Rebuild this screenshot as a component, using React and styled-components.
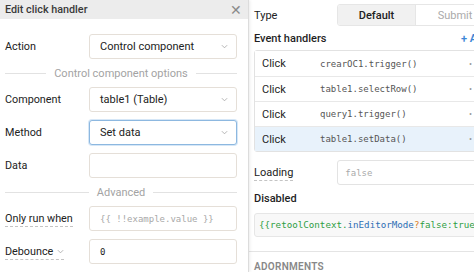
import React from "react";
import styled, { createGlobalStyle } from "styled-components";

const Global = createGlobalStyle`
  html, body { margin: 0; padding: 0; background: #fff; }
  body { font-family: Roboto, "Noto Sans", sans-serif; color: #1f1f1f; overflow: hidden; }
  * { box-sizing: border-box; }
`;

const MONO = `"DejaVu Sans Mono", "Liberation Mono", monospace`;

const Page = styled.div`
  display: flex;
  width: 474px;
  height: 272px;
  overflow: hidden;
`;

const Popover = styled.div`
  width: 249px;
  flex: none;
  display: flex;
  flex-direction: column;
  border-right: 1px solid #dcdcdc;
  box-shadow: 1px 0 3px rgba(0,0,0,0.08);
  z-index: 1;
  background: #fff;
`;

const Header = styled.div`
  height: 25px;
  background: #ececec;
  display: flex;
  align-items: center;
  justify-content: space-between;
  padding: 0 6px 0 5px;
  font-size: 10.8px;
  font-weight: 500;
  color: #3a3a3a;
`;

const Close = styled.span`
  font-size: 14px;
  color: #8a8a8a;
  font-weight: 300;
`;

const Body = styled.div`
  padding: 15px 11px 0 5px;
  display: flex;
  flex-direction: column;
`;

const Row = styled.div`
  display: grid;
  grid-template-columns: 84px 1fr;
  align-items: center;
  height: 25px;
  margin-bottom: ${(p) => p.$mb ?? 8}px;
`;

const Label = styled.span`
  font-size: 10.8px;
  color: #222;
  justify-self: start;
  display: flex;
  align-items: center;
  gap: 4px;
  ${(p) => p.$dotted && `border-bottom: 1px dashed #c4c4c4; line-height: 15px;`}
`;

const Field = styled.div`
  height: 25px;
  border: 1px solid ${(p) => (p.$focus ? "#8db8e0" : "#e5dfd8")};
  box-shadow: ${(p) => (p.$focus ? "0 0 0 1px #d6e7f7" : "none")};
  border-radius: 3px;
  display: flex;
  align-items: center;
  justify-content: space-between;
  padding: 0 8px 0 10px;
  font-size: ${(p) => (p.$mono ? "9px" : "11px")};
  color: ${(p) => (p.$muted ? "#a8a8a8" : "#222")};
  font-family: ${(p) => (p.$mono ? MONO : "inherit")};
  background: #fff;
`;

const Chevron = () => (
  <svg width="7" height="5" viewBox="0 0 8 5">
    <path d="M1 1l3 3 3-3" fill="none" stroke="#aaa" strokeWidth="1" />
  </svg>
);

const Divider = styled.div`
  display: flex;
  align-items: center;
  gap: 8px;
  height: 16px;
  margin: 0 0 6px;
  font-size: 11px;
  color: #a3a3a3;
  &::before, &::after {
    content: "";
    flex: 1;
    height: 1px;
    background: #e2e2e2;
  }
`;

const Side = styled.div`
  flex: 1;
  padding: 4px 0 0 5px;
  display: flex;
  flex-direction: column;
  min-width: 0;
`;

const TypeRow = styled.div`
  display: flex;
  align-items: center;
  height: 22px;
`;

const SideLabel = styled.span`
  font-size: 11px;
  color: #222;
  width: 83px;
  flex: none;
  ${(p) => p.$dotted && `border-bottom: 1px dashed #c4c4c4; line-height: 15px; width: auto;`}
`;

const Segmented = styled.div`
  flex: none;
  width: 150px;
  display: flex;
  height: 22px;
  border: 1px solid #e6e6e6;
  border-radius: 3px 0 0 3px;
  overflow: hidden;
`;

const Segment = styled.div`
  width: 78px;
  flex: none;
  display: flex;
  align-items: center;
  justify-content: center;
  font-size: 11px;
  background: ${(p) => (p.$active ? "#f1f1f1" : "#fff")};
  color: ${(p) => (p.$active ? "#222" : "#aaa")};
  font-weight: ${(p) => (p.$active ? 500 : 400)};
  border-right: ${(p) => (p.$active ? "1px solid #e6e6e6" : "none")};
`;

const SectionHead = styled.div`
  display: flex;
  justify-content: space-between;
  align-items: center;
  height: 16px;
  margin-top: 5px;
  margin-bottom: 4px;
  font-size: 11px;
  font-weight: 500;
`;

const Add = styled.span`
  color: #3c86d6;
  font-weight: 600;
  margin-right: -3px;
  white-space: nowrap;
`;

const List = styled.div`
  border: 1px solid #e2e2e2;
  border-radius: 3px;
  margin-right: -10px;
`;

const Handler = styled.div`
  height: 25px;
  display: flex;
  align-items: center;
  padding-left: 7px;
  font-size: 11px;
  background: ${(p) => (p.$sel ? "#e8f2fb" : "#fff")};
  border-top: ${(p) => (p.$first ? "none" : "1px solid #e8e8e8")};
`;

const Event = styled.span`
  width: 58px;
  flex: none;
`;

const Code = styled.span`
  font-family: ${MONO};
  font-size: 9px;
  color: #555;
  flex: 1;
`;

const Dot = styled.span`
  color: #999;
  width: 14px;
  font-size: 9px;
`;

const LoadRow = styled.div`
  display: flex;
  align-items: center;
  margin-top: 8px;
  height: 25px;
`;

const Input = styled.div`
  flex: 1;
  margin-right: -10px;
  height: 25px;
  border: 1px solid #e3e3e3;
  border-radius: 3px;
  display: flex;
  align-items: center;
  padding-left: 7px;
  font-family: ${MONO};
  font-size: 9px;
  color: #aaa;
`;

const Gap = styled.div`
  width: ${(p) => p.$w}px;
  flex: none;
`;

const Disabled = styled.div`
  font-size: 11px;
  font-weight: 500;
  margin-top: 7px;
  height: 16px;
`;

const CodeBox = styled.div`
  margin-top: 5px;
  margin-right: -10px;
  height: 25px;
  border: 1px solid #e6e6e6;
  border-radius: 3px;
  background: #f8f8f8;
  display: flex;
  align-items: center;
  padding-left: 4px;
  font-family: ${MONO};
  font-size: 9.2px;
  white-space: nowrap;
  overflow: hidden;
  color: #2f9e44;
`;

const Blue = styled.span` color: #2e6fb5; `;
const Orange = styled.span` color: #d9822b; `;

const Sep = styled.div`
  height: 1px;
  background: #e4e4e4;
  margin: 14px -10px 0 -5px;
`;

const Adorn = styled.div`
  margin-top: 9px;
  font-size: 10px;
  font-weight: 600;
  color: #888;
  letter-spacing: 0.3px;
`;

const handlers = [
  ["crearOC1.trigger()", false],
  ["table1.selectRow()", false],
  ["query1.trigger()", false],
  ["table1.setData()", true],
];

export default function App() {
  return (
    <>
      <Global />
      <Page>
        <Popover>
          <Header>
            <span>Edit click handler</span>
            <Close>✕</Close>
          </Header>
          <Body>
            <Row $mb={6}>
              <Label>Action</Label>
              <Field>Control component<Chevron /></Field>
            </Row>
            <Divider>Control component options</Divider>
            <Row>
              <Label>Component</Label>
              <Field>table1 (Table)<Chevron /></Field>
            </Row>
            <Row>
              <Label>Method</Label>
              <Field $focus>Set data<Chevron /></Field>
            </Row>
            <Row $mb={6}>
              <Label>Data</Label>
              <Field />
            </Row>
            <Divider>Advanced</Divider>
            <Row>
              <Label $dotted>Only run when</Label>
              <Field $mono $muted>{"{{ !!example.value }}"}</Field>
            </Row>
            <Row>
              <Label $dotted>Debounce <Chevron /></Label>
              <Field $mono>0</Field>
            </Row>
          </Body>
        </Popover>
        <Side>
          <TypeRow>
            <SideLabel>Type</SideLabel>
            <Segmented>
              <Segment $active>Default</Segment>
              <Segment>Submit</Segment>
            </Segmented>
          </TypeRow>
          <SectionHead>
            <span>Event handlers</span>
            <Add>+ A</Add>
          </SectionHead>
          <List>
            {handlers.map(([c, sel], i) => (
              <Handler key={c} $sel={sel} $first={i === 0}>
                <Event>Click</Event>
                <Code>{c}</Code>
                <Dot>•</Dot>
              </Handler>
            ))}
          </List>
          <LoadRow>
            <SideLabel $dotted>Loading</SideLabel>
            <Gap $w={44} />
            <Input>false</Input>
          </LoadRow>
          <Disabled>Disabled</Disabled>
          <CodeBox>
            {"{{retoolContext."}<Blue>inEditorMode</Blue><Orange>?</Orange>{"false:true}}"}
          </CodeBox>
          <Sep />
          <Adorn>ADORNMENTS</Adorn>
        </Side>
      </Page>
    </>
  );
}
